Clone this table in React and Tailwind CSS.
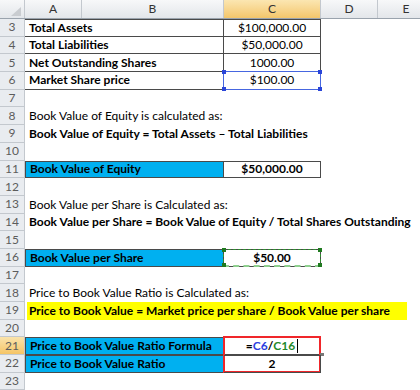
import React from "react";

const Num = ({ n, active }) => (
  <div
    className={
      "w-[25px] shrink-0 flex items-center justify-center border-r border-b border-[#c3c8ce] text-[12px] text-[#5c5c5c] " +
      (active
        ? "bg-gradient-to-b from-[#fae3ab] to-[#f5c566]"
        : "bg-[#e9ecf0]")
    }
  >
    {n}
  </div>
);

const Row = ({ n, active, children }) => (
  <div className="flex h-[17.7px] box-border">
    <Num n={n} active={active} />
    {children}
  </div>
);

const Handle = ({ pos, color }) => (
  <div className={"absolute w-[4px] h-[4px] " + pos + " " + color} />
);

const DataRow = ({ n, label, value, top, selected }) => (
  <Row n={n}>
    <div
      className={
        "w-[199px] shrink-0 flex items-center pl-[4px] font-bold border-b border-r border-[#4a4a4a] " +
        (top ? "border-t" : "")
      }
    >
      {label}
    </div>
    <div
      className={
        "relative w-[97px] shrink-0 flex items-center justify-center border-b border-r border-[#4a4a4a] " +
        (top ? "border-t" : "")
      }
    >
      {value}
      {selected && (
        <div className="absolute -left-px -top-px -right-px -bottom-px border border-[#4666e0]">
          <Handle pos="-left-[2px] -top-[2px]" color="bg-[#2a45d8]" />
          <Handle pos="-right-[2px] -top-[2px]" color="bg-[#2a45d8]" />
          <Handle pos="-left-[2px] -bottom-[2px]" color="bg-[#2a45d8]" />
          <Handle pos="-right-[2px] -bottom-[2px]" color="bg-[#2a45d8]" />
        </div>
      )}
    </div>
  </Row>
);

const TextRow = ({ n, children, bold }) => (
  <Row n={n}>
    <div
      className={
        "flex-1 flex items-center pl-[4px] whitespace-nowrap " +
        (bold ? "font-bold" : "")
      }
    >
      {children}
    </div>
  </Row>
);

const Empty = ({ n }) => (
  <Row n={n}>
    <div className="flex-1" />
  </Row>
);

const BlueRow = ({ n, label, children, active }) => (
  <Row n={n} active={active}>
    <div className="w-[199px] shrink-0 flex items-center pl-[4px] font-bold bg-[#00b0f0] border border-[#4a4a4a]">
      {label}
    </div>
    <div className="relative w-[97px] shrink-0 flex items-center justify-center font-bold border-y border-r border-[#4a4a4a]">
      {children}
    </div>
  </Row>
);

export default function App() {
  return (
    <div className="w-[420px] h-[390px] overflow-hidden bg-white font-['Lato',sans-serif] text-[12px] text-black leading-none">
      {/* column headers */}
      <div className="flex h-[19px] border-b border-[#9aa3ad]">
        <div className="relative w-[25px] shrink-0 bg-gradient-to-b from-[#f7f8f9] to-[#e3e6ea] border-r border-[#c3c8ce]">
          <svg className="absolute right-[3px] bottom-[2px]" width="10" height="9" viewBox="0 0 10 9">
            <path d="M10 0 L10 9 L0 9 Z" fill="#c9ccd0" />
          </svg>
        </div>
        {[
          ["A", "w-[57px]", false],
          ["B", "w-[142px]", false],
          ["C", "w-[97px]", true],
          ["D", "w-[57px]", false],
          ["E", "w-[57px]", false],
        ].map(([l, w, a]) => (
          <div
            key={l}
            className={
              w +
              " shrink-0 flex items-center justify-center border-r border-[#c3c8ce] text-[#333] text-[12px] " +
              (a
                ? "bg-gradient-to-b from-[#fbe6b1] to-[#f4c66a]"
                : "bg-gradient-to-b from-[#f7f8f9] to-[#e3e6ea]")
            }
          >
            {l}
          </div>
        ))}
      </div>

      <DataRow n={3} label="Total Assets" value="$100,000.00" top />
      <DataRow n={4} label="Total Liabilities" value="$50,000.00" />
      <DataRow n={5} label="Net Outstanding Shares" value="1000.00" />
      <DataRow n={6} label="Market Share price" value="$100.00" selected />
      <Empty n={7} />
      <TextRow n={8}>Book Value of Equity is calculated as:</TextRow>
      <TextRow n={9} bold>
        Book Value of Equity = Total Assets – Total Liabilities
      </TextRow>
      <Empty n={10} />
      <BlueRow n={11} label="Book Value of Equity">
        $50,000.00
      </BlueRow>
      <Empty n={12} />
      <TextRow n={13}>Book Value per Share is Calculated as:</TextRow>
      <TextRow n={14} bold>
        Book Value per Share = Book Value of Equity / Total Shares Outstanding
      </TextRow>
      <Empty n={15} />
      <BlueRow n={16} label="Book Value per Share">
        $50.00
        <div className="absolute -left-px -top-px -right-px -bottom-px border border-dashed border-[#2e8b2e] border-b-2 border-b-[#8fd08f] border-b-solid">
          <Handle pos="-left-[2px] -top-[2px]" color="bg-[#1f7a1f]" />
          <Handle pos="-right-[2px] -top-[2px]" color="bg-[#1f7a1f]" />
          <Handle pos="-left-[2px] -bottom-[2px]" color="bg-[#1f7a1f]" />
          <Handle pos="-right-[2px] -bottom-[2px]" color="bg-[#1f7a1f]" />
        </div>
      </BlueRow>
      <Empty n={17} />
      <TextRow n={18}>Price to Book Value Ratio is Calculated as:</TextRow>
      <Row n={19}>
        <div className="w-[380px] ml-[2px] shrink-0 flex items-center pl-[2px] whitespace-nowrap font-bold bg-[#ffff00]">
          Price to Book Value = Market price per share / Book Value per share
        </div>
      </Row>
      <Empty n={20} />
      <BlueRow n={21} label="Price to Book Value Ratio Formula" active>
        <span className="flex items-center">
          =<span className="text-[#2b3fe0]">C6</span>/
          <span className="text-[#1f8a2a]">C16</span>
          <span className="ml-[2px] w-px h-[14px] bg-black" />
        </span>
        <div className="absolute -left-px -top-[2px] -right-px h-[37px] border-2 border-[#f0262a]" />
        <div className="absolute -right-[4px] bottom-[-2px] w-[4px] h-[3px] bg-[#777]" />
      </BlueRow>
      <BlueRow n={22} label="Price to Book Value Ratio">
        2
      </BlueRow>
      <Empty n={23} />
    </div>
  );
}
